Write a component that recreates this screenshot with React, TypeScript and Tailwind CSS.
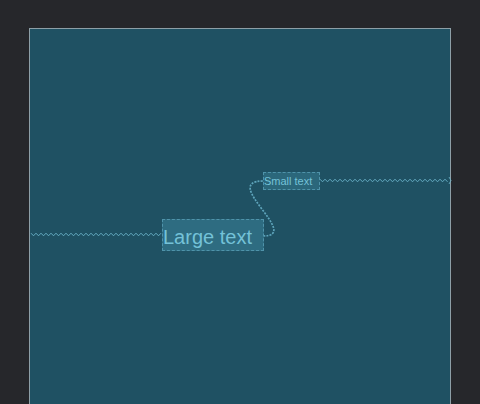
import React from "react";

function zigzag(x1: number, x2: number, y: number, amp = 1.3, step = 2.5) {
  const pts: string[] = [];
  let up = true;
  for (let x = x1; x <= x2; x += step) {
    pts.push(`${x.toFixed(1)},${(y + (up ? -amp : amp)).toFixed(1)}`);
    up = !up;
  }
  return pts.join(" ");
}

export default function App() {
  return (
    <div className="w-[480px] h-[404px] bg-[#26272b] overflow-hidden pt-[28px] pl-[29px]" style={{ fontFamily: '"Liberation Sans", Arial, sans-serif' }}>
      <div className="relative w-[422px] h-[380px] bg-[#1f5163] border border-[#8d9fa7] border-b-0">
        <svg className="absolute left-[-30px] top-[-29px]" width={480} height={404} viewBox="0 0 480 404">
          <polyline points={zigzag(31, 161, 234.5)} fill="none" stroke="#64abc2" strokeWidth={1} />
          <polyline points={zigzag(320, 449, 180.5)} fill="none" stroke="#64abc2" strokeWidth={1} />
          <path d="M263,236 C302,236 220,181 263,181" fill="none" stroke="#5ea4bb" strokeWidth={1.7} strokeDasharray="2 1.2" />
          <path d="M449,177 L451,180.5 L449,184" fill="none" stroke="#6fb6cc" strokeWidth={0.8} />
        </svg>
        <div className="absolute left-[132px] top-[190px] w-[102px] h-[32px] bg-[#2e6c81] border border-dashed border-[#4f93aa] flex items-center pt-[3px] text-[20px] leading-none text-[#74c2d8]">
          Large text
        </div>
        <div className="absolute left-[233px] top-[143px] w-[57px] h-[18px] bg-[#2b677b] border border-dashed border-[#4f93aa] flex items-center pt-[1px] text-[11px] leading-none text-[#74c2d8]">
          Small text
        </div>
      </div>
    </div>
  );
}
